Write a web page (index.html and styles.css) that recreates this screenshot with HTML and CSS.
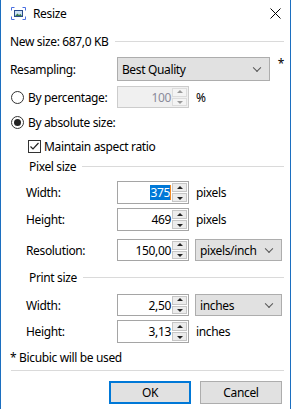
FILE: index.html
```html
<!DOCTYPE html>
<html lang="en">
<head>
  <meta charset="UTF-8">
  <title>Resize</title>
  <link rel="stylesheet" href="styles.css">
</head>
<body>
  <div class="window">
    <div class="titlebar">
      <svg class="app-icon" width="15" height="13" viewBox="0 0 15 13">
        <path d="M0.5 3.5V0.5H3.5M11.5 0.5H14.5V3.5M14.5 9.5V12.5H11.5M3.5 12.5H0.5V9.5" fill="none" stroke="#4a6fe0"/>
        <rect x="3.5" y="3.5" width="8" height="6" fill="#cfe3f5" stroke="#2b4c8c"/>
        <path d="M4 9L6.5 6.5L8 8L9.5 7L11 9Z" fill="#3b7a4a"/>
      </svg>
      <span class="title">Resize</span>
      <svg class="close" width="11" height="11" viewBox="0 0 11 11">
        <path d="M0.5 0.5L10.5 10.5M10.5 0.5L0.5 10.5" stroke="#000" stroke-width="1"/>
      </svg>
    </div>

    <div class="content">
      <div class="row r-newsize">
        <span>New size: 687,0 KB</span>
        <span class="rule"></span>
      </div>

      <div class="row r-resample">
        <span class="label">Resampling:</span>
        <div class="select wide">Best Quality <span class="chev"></span></div>
        <span class="star">*</span>
      </div>

      <div class="row r-percent">
        <span class="radio"></span>
        <span class="label radio-label">By percentage:</span>
        <div class="spin disabled">
          <span class="value">100</span>
          <span class="arrows"><i class="up"></i><i class="down"></i></span>
        </div>
        <span class="unit">%</span>
      </div>

      <div class="row r-absolute">
        <span class="radio checked"></span>
        <span>By absolute size:</span>
      </div>

      <div class="row r-check">
        <span class="checkbox">
          <svg width="11" height="11" viewBox="0 0 11 11"><path d="M1.5 5.5L4 8L9.5 2" fill="none" stroke="#222" stroke-width="1.2"/></svg>
        </span>
        <span>Maintain aspect ratio</span>
      </div>

      <div class="row r-group">
        <span>Pixel size</span>
        <span class="rule"></span>
      </div>

      <div class="row r-field first">
        <span class="label field-label">Width:</span>
        <div class="spin">
          <span class="value"><span class="sel">375</span><span class="caret"></span></span>
          <span class="arrows"><i class="up"></i><i class="down"></i></span>
        </div>
        <span class="unit">pixels</span>
      </div>

      <div class="row r-field">
        <span class="label field-label">Height:</span>
        <div class="spin">
          <span class="value">469</span>
          <span class="arrows"><i class="up"></i><i class="down"></i></span>
        </div>
        <span class="unit">pixels</span>
      </div>

      <div class="row r-field res">
        <span class="label field-label">Resolution:</span>
        <div class="spin">
          <span class="value">150,00</span>
          <span class="arrows"><i class="up"></i><i class="down"></i></span>
        </div>
        <div class="select unit-select">pixels/inch <span class="chev"></span></div>
      </div>

      <div class="row r-group print">
        <span>Print size</span>
        <span class="rule"></span>
      </div>

      <div class="row r-field pfirst">
        <span class="label field-label">Width:</span>
        <div class="spin">
          <span class="value">2,50</span>
          <span class="arrows"><i class="up"></i><i class="down"></i></span>
        </div>
        <div class="select unit-select">inches <span class="chev"></span></div>
      </div>

      <div class="row r-field">
        <span class="label field-label">Height:</span>
        <div class="spin">
          <span class="value">3,13</span>
          <span class="arrows"><i class="up"></i><i class="down"></i></span>
        </div>
        <span class="unit">inches</span>
      </div>

      <div class="row r-note">* Bicubic will be used</div>

      <div class="separator"></div>

      <div class="row r-buttons">
        <button class="btn default">OK</button>
        <button class="btn">Cancel</button>
      </div>
    </div>
  </div>
</body>
</html>
```

FILE: styles.css
```css
body {
  margin: 0;
  background: #fff;
  font-family: "Noto Sans", "Open Sans", sans-serif;
  font-size: 12px;
  letter-spacing: -0.35px;
  color: #000;
}
.window {
  width: 289px;
  height: 409px;
  border-left: 1px solid #1c6fc0;
  border-right: 1px solid #1c6fc0;
  background: #fff;
  overflow: hidden;
}
.titlebar {
  height: 27px;
  display: flex;
  align-items: center;
  padding-left: 10px;
}
.app-icon {
  margin-right: 7px;
}
.title {
  flex: 1;
}
.close {
  margin-right: 9px;
}
.content {
  padding: 0 6px 0 9px;
  display: flex;
  flex-direction: column;
}
.row {
  display: flex;
  align-items: center;
}
.rule {
  flex: 1;
  height: 1px;
  background: #dadada;
  margin-left: 6px;
}
.label {
  width: 107px;
}
.r-newsize { height: 22px; margin-top: 3px; }
.r-resample { height: 24px; margin-top: 5px; }
.r-percent { height: 22px; margin-top: 5px; }
.r-absolute { height: 20px; margin-top: 4px; }
.r-check { height: 20px; margin-top: 4px; padding-left: 18px; }
.r-group { height: 18px; margin-top: 1px; padding-left: 18px; }
.r-group.print { margin-top: 7px; }
.r-field { height: 23px; margin-top: 4px; }
.r-field.first { margin-top: 6px; }
.r-field.res { margin-top: 8px; height: 22px; }
.r-field.pfirst { margin-top: 8px; height: 22px; }
.r-note { height: 18px; margin-top: 5px; }
.r-buttons {
  height: 23px;
  margin-top: 10px;
  justify-content: flex-end;
  gap: 9px;
  padding-right: 2px;
}

.select {
  box-sizing: border-box;
  height: 100%;
  background: #e1e1e1;
  border: 1px solid #adadad;
  display: flex;
  align-items: center;
  padding-left: 4px;
  position: relative;
}
.select.wide {
  width: 153px;
}
.select.unit-select {
  width: 87px;
  margin-left: 6px;
}
.chev {
  position: absolute;
  right: 9px;
  top: 50%;
  width: 5px;
  height: 5px;
  border-right: 1px solid #555;
  border-bottom: 1px solid #555;
  transform: translateY(-70%) rotate(45deg);
}
.star {
  margin-left: 8px;
  align-self: flex-start;
  margin-top: -2px;
}

.radio {
  box-sizing: border-box;
  width: 13px;
  height: 13px;
  border: 1px solid #333;
  border-radius: 50%;
  margin-left: 1px;
  margin-right: 4px;
  display: flex;
  align-items: center;
  justify-content: center;
}
.radio.checked::after {
  content: "";
  width: 7px;
  height: 7px;
  border-radius: 50%;
  background: #222;
}
.radio-label {
  width: 89px;
}
.checkbox {
  box-sizing: border-box;
  width: 13px;
  height: 13px;
  border: 1px solid #333;
  margin-right: 3px;
  display: flex;
  align-items: center;
  justify-content: center;
}
.checkbox svg {
  display: block;
}
.r-group > span:first-child {
  margin-left: 1px;
}
.field-label {
  padding-left: 16px;
  width: 91px;
}

.spin {
  box-sizing: border-box;
  width: 72px;
  height: 100%;
  border: 1px solid #a5a5a5;
  display: flex;
  background: #fff;
}
.spin.disabled {
  background: #f0f0f0;
  border-color: #cccccc;
  color: #8a8a9a;
}
.spin .value {
  flex: 1;
  display: flex;
  align-items: center;
  justify-content: flex-end;
  padding-right: 1px;
}
.sel {
  background: #0078d7;
  color: #fff;
  line-height: 15px;
}
.caret {
  width: 1px;
  height: 15px;
  background: #f08a24;
}
.arrows {
  width: 15px;
  display: flex;
  flex-direction: column;
  padding: 1px 1px 1px 0;
  gap: 1px;
}
.arrows i {
  flex: 1;
  background: #ececec;
  border: 1px solid #c6c6c6;
  position: relative;
}
.disabled .arrows i {
  background: #f4f4f4;
  border-color: #dcdcdc;
}
.arrows i::after {
  content: "";
  position: absolute;
  left: 50%;
  top: 50%;
  margin-left: -3px;
  border-left: 3px solid transparent;
  border-right: 3px solid transparent;
}
.arrows .up::after {
  margin-top: -2px;
  border-bottom: 3px solid #222;
}
.arrows .down::after {
  margin-top: -1px;
  border-top: 3px solid #222;
}
.disabled .arrows .up::after { border-bottom-color: #999; }
.disabled .arrows .down::after { border-top-color: #999; }
.unit {
  margin-left: 7px;
}

.separator {
  height: 1px;
  background: #dadada;
  margin: 4px 0 0 1px;
}
.btn {
  box-sizing: border-box;
  width: 82px;
  height: 23px;
  font: inherit;
  letter-spacing: inherit;
  background: #e1e1e1;
  border: 1px solid #adadad;
  padding: 0;
}
.btn.default {
  border: 2px solid #0078d7;
}
```
